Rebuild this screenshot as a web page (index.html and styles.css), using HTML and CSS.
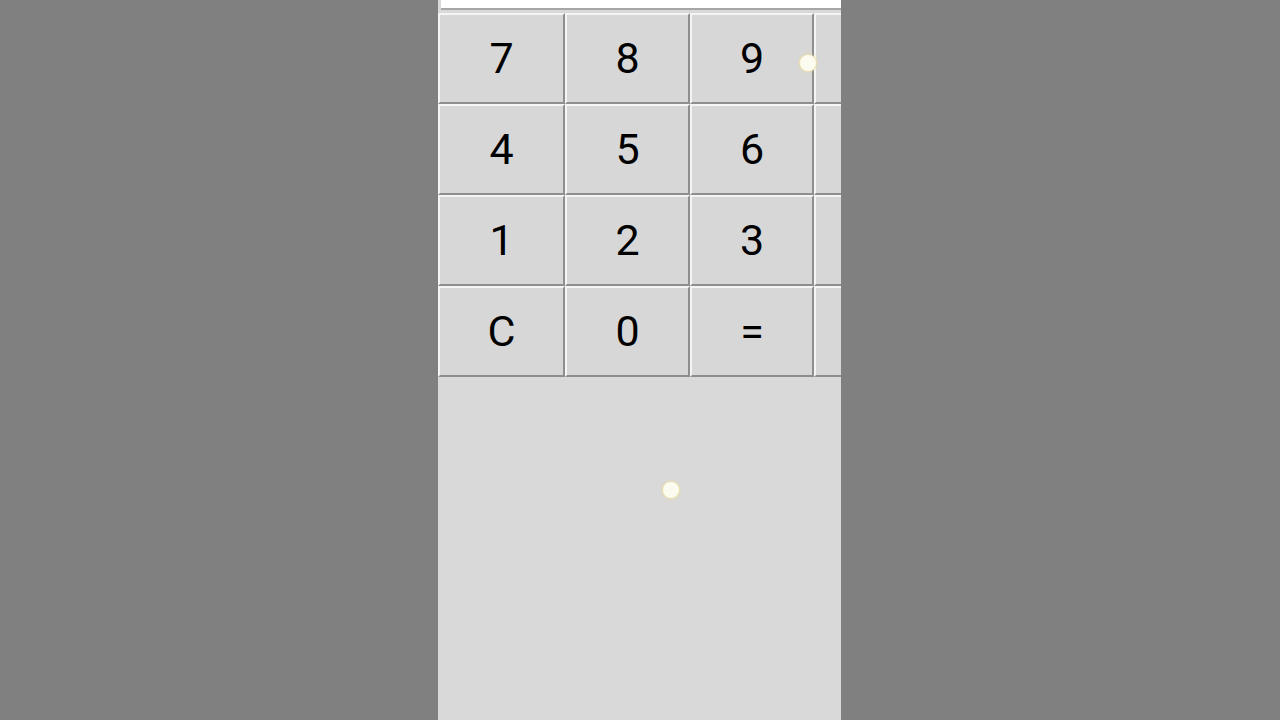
FILE: index.html
```html
<!DOCTYPE html>
<html>
<head>
<meta charset="utf-8">
<link rel="stylesheet" href="styles.css">
</head>
<body>
<div class="screen">
  <div class="phone">
    <div class="display"></div>
    <div class="keys">
      <div class="key">7</div><div class="key">8</div><div class="key">9</div><div class="key"></div>
      <div class="key">4</div><div class="key">5</div><div class="key">6</div><div class="key"></div>
      <div class="key">1</div><div class="key">2</div><div class="key">3</div><div class="key"></div>
      <div class="key">C</div><div class="key">0</div><div class="key">=</div><div class="key"></div>
    </div>
    <div class="touch touch-a"></div>
    <div class="touch touch-b"></div>
  </div>
</div>
</body>
</html>
```
FILE: styles.css
```css
html, body {
  margin: 0;
  padding: 0;
  background: #808080;
}
.screen {
  width: 1280px;
  height: 720px;
  display: flex;
  overflow: hidden;
}
.phone {
  position: relative;
  margin-left: 438px;
  width: 403px;
  height: 720px;
  background: #d9d9d9;
  overflow: hidden;
}
.display {
  height: 8px;
  margin-left: 3px;
  background: #ffffff;
  border-bottom: 2px solid #a6a6a6;
}
.keys {
  margin-top: 3px;
  display: grid;
  grid-template-columns: 127px 125px 124px 124px;
  grid-auto-rows: 91px;
  width: 500px;
}
.key {
  box-sizing: border-box;
  background: #d7d7d7;
  border-top: 2px solid #f5f5f5;
  border-left: 2px solid #f5f5f5;
  border-right: 2px solid #8e8e8e;
  border-bottom: 2px solid #8e8e8e;
  display: flex;
  align-items: center;
  justify-content: center;
  font-family: Roboto, "Noto Sans", sans-serif;
  font-size: 43px;
  color: #000000;
  padding-bottom: 2px;
}
.touch {
  position: absolute;
  width: 16px;
  height: 16px;
  border-radius: 50%;
  background: #fbfbf0;
  box-shadow: 0 0 0 1px #ebe0b0, 0 0 3px 1px rgba(236, 220, 150, 0.6);
}
.touch-a { left: 362px; top: 55px; }
.touch-b { left: 225px; top: 482px; }
```
